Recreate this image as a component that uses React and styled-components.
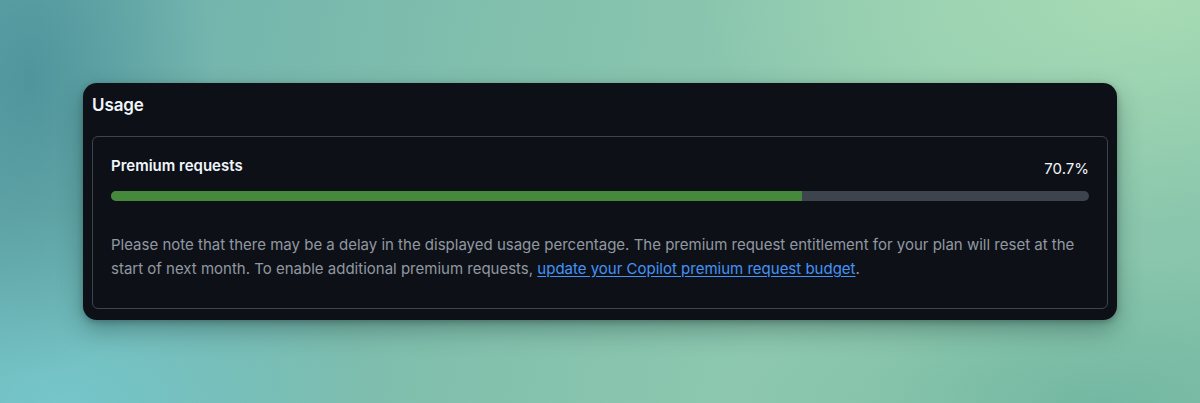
import React from "react";
import styled, { createGlobalStyle } from "styled-components";

const GlobalStyle = createGlobalStyle`
  * { box-sizing: border-box; }
  html, body { margin: 0; padding: 0; }
  body {
    font-family: Inter, "Noto Sans", "Liberation Sans", sans-serif;
    -webkit-font-smoothing: antialiased;
  }
`;

const Backdrop = styled.div`
  width: 1200px;
  height: 403px;
  padding: 83px 83px 0 83px;
  background:
    radial-gradient(ellipse 260px 420px at 30px 80px, rgba(70, 140, 150, 0.75), transparent 70%),
    radial-gradient(ellipse 420px 260px at 60px 403px, rgba(118, 200, 205, 0.9), transparent 75%),
    radial-gradient(ellipse 600px 300px at 1150px 0px, rgba(168, 220, 180, 0.95), transparent 75%),
    radial-gradient(ellipse 500px 200px at 1100px 403px, rgba(110, 180, 160, 0.8), transparent 75%),
    linear-gradient(100deg, #6aaeae 0%, #82c0ad 40%, #92cbb0 75%, #88c5ac 100%);
`;

const Card = styled.section`
  background: #0d1117;
  border-radius: 14px;
  padding: 10px 9px 11px 9px;
  box-shadow: 0 10px 24px rgba(20, 50, 50, 0.35), 0 2px 6px rgba(0, 0, 0, 0.25);
`;

const Title = styled.h2`
  margin: 0 0 19px 0;
  font-size: 17px;
  font-weight: 600;
  line-height: 24px;
  color: #f0f6fc;
  letter-spacing: -0.1px;
`;

const Panel = styled.div`
  border: 1px solid #3d444d;
  border-radius: 6px;
  padding: 19px 18px 27px 18px;
`;

const Header = styled.div`
  display: flex;
  justify-content: space-between;
  align-items: flex-start;
  margin-bottom: 12px;
`;

const Label = styled.span`
  font-size: 15px;
  font-weight: 600;
  line-height: 20px;
  color: #f0f6fc;
`;

const Percent = styled.span`
  font-size: 15px;
  font-weight: 400;
  line-height: 20px;
  margin-top: 3px;
  color: #f0f6fc;
`;

const Track = styled.div`
  height: 10px;
  border-radius: 5px;
  background: #3d444d;
  overflow: hidden;
`;

const Fill = styled.div`
  height: 100%;
  background: #46883c;
`;

const Note = styled.p`
  margin: 32px 0 0 0;
  font-size: 15px;
  line-height: 24px;
  color: #9198a1;
`;

const Link = styled.a`
  color: #4493f8;
  text-decoration: underline;
  text-underline-offset: 2px;
`;

export default function App() {
  const pct = 70.7;
  return (
    <>
      <GlobalStyle />
      <Backdrop>
        <Card>
          <Title>Usage</Title>
          <Panel>
            <Header>
              <Label>Premium requests</Label>
              <Percent>{pct}%</Percent>
            </Header>
            <Track>
              <Fill style={{ width: `${pct}%` }} />
            </Track>
            <Note>
              Please note that there may be a delay in the displayed usage percentage. The premium request
              entitlement for your plan will reset at the start of next month. To enable additional premium
              requests, <Link href="#">update your Copilot premium request budget</Link>.
            </Note>
          </Panel>
        </Card>
      </Backdrop>
    </>
  );
}
